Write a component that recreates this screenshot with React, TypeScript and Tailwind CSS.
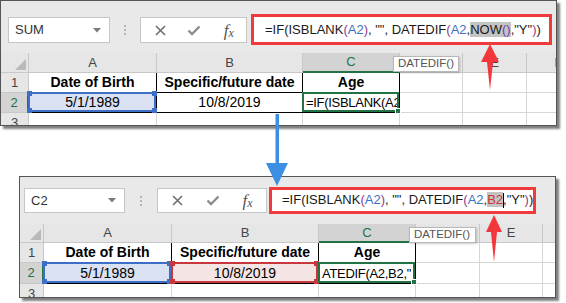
import React from 'react';

type Tone = 'blue' | 'red' | 'green';

const GRID = 'border-r border-b border-[#d6d6d6]';
const TABLE = 'border-r border-b border-black';
const HEAD = 'border-r border-b border-[#c8c8c8] bg-[#e6e6e6] text-[#444]';

// level-2 / level-3 bracket colours and range colours, as Excel shows them while editing
const P2 = 'text-[#8b3d8b]';
const P3 = 'text-[#6a3fb5]';
const REF_A = 'text-[#3d6fc7]';

function RangeBox({ tone }: { tone: Tone }) {
  const border =
    tone === 'blue' ? 'border-[#3d6fc7]' : tone === 'red' ? 'border-[#c9363c]' : 'border-[#217346]';
  const bg = tone === 'blue' ? 'bg-[#3d6fc7]' : 'bg-[#c9363c]';
  return (
    <div className={`pointer-events-none absolute -left-px -top-px right-0 bottom-0 z-10 border-2 ${border}`}>
      {tone === 'green' ? (
        <span className="absolute -right-[4px] -bottom-[4px] h-[6px] w-[6px] border border-white bg-[#217346]" />
      ) : (
        <>
          <span className={`absolute -left-[3px] -top-[3px] h-[5px] w-[5px] ${bg}`} />
          <span className={`absolute -right-[3px] -top-[3px] h-[5px] w-[5px] ${bg}`} />
          <span className={`absolute -left-[3px] -bottom-[3px] h-[5px] w-[5px] ${bg}`} />
          <span className={`absolute -right-[3px] -bottom-[3px] h-[5px] w-[5px] ${bg}`} />
        </>
      )}
    </div>
  );
}

function Formula({ after }: { after: boolean }) {
  return (
    <span className="whitespace-pre text-[13px] leading-none text-[#1a1a1a]">
      =IF(ISBLANK<span className={P2}>(</span><span className={REF_A}>A2</span><span className={P2}>)</span>, "", DATEDIF<span className={P2}>(</span><span className={REF_A}>A2</span>,
      {after ? (
        <>
          <span className="bg-[#c4c4c4] text-[#c9363c]">B2</span>
          <span className="-mr-px inline-block h-[15px] w-px bg-black align-middle" />
        </>
      ) : (
        <span className="bg-[#c4c4c4]">
          NOW<span className={P3}>()</span>
        </span>
      )}
      ,"Y"<span className={P2}>)</span>)
    </span>
  );
}

function Sheet({ after }: { after: boolean }) {
  const c = after
    ? {
        frame: 'ml-[19px] mt-[50px] h-[122px] w-[537px]',
        bar: 'h-[47px]',
        name: 'ml-[4px] mt-[11px] h-[25px] w-[101px]',
        sep: 'ml-[15px] mt-[11px] h-[25px]',
        fx: 'ml-[15px] mt-[11px] h-[25px] w-[110px]',
        red: 'ml-[2px] mt-[10px] h-[27px] w-[267px] pl-[10px]',
        head: 'h-[19px]',
        r1: 'h-[20px]',
        r2: 'h-[21px]',
        r3: 'h-[13px]',
        hdr: 'w-[24px]',
        A: 'w-[128px]',
        B: 'w-[147px]',
        C: 'w-[97px]',
        D: 'w-[64px]',
        E: 'w-[63px]',
      }
    : {
        frame: 'h-[126px] w-[557px]',
        bar: 'h-[52px]',
        name: 'ml-[7px] mt-[16px] h-[26px] w-[102px]',
        sep: 'ml-[14px] mt-[16px] h-[26px]',
        fx: 'ml-[14px] mt-[16px] h-[26px] w-[107px]',
        red: 'ml-[4px] mt-[13px] h-[31px] w-[301px] pl-[11px]',
        head: 'h-[20px]',
        r1: 'h-[20px]',
        r2: 'h-[20px]',
        r3: 'h-[12px]',
        hdr: 'w-[28px]',
        A: 'w-[128px]',
        B: 'w-[146px]',
        C: 'w-[97px]',
        D: 'w-[63px]',
        E: 'w-[64px]',
      };

  const cell = 'flex shrink-0 items-center justify-center';

  return (
    <div
      className={`${c.frame} flex shrink-0 flex-col overflow-hidden border border-[#555] bg-white shadow-[3px_3px_2px_rgba(0,0,0,0.5)]`}
    >
      {/* formula bar */}
      <div className={`${c.bar} flex shrink-0 items-start bg-[#e9e9e9]`}>
        <div
          className={`${c.name} flex shrink-0 items-center justify-between border border-[#c6c6c6] bg-white pl-[6px] pr-[8px] text-[13px] text-[#333]`}
        >
          <span>{after ? 'C2' : 'SUM'}</span>
          <svg width="8" height="5" viewBox="0 0 8 5">
            <path d="M0 0 H8 L4 4.5 Z" fill="#7a7a7a" />
          </svg>
        </div>
        <div className={`${c.sep} flex w-[2px] shrink-0 flex-col items-center justify-center gap-[2px]`}>
          <span className="h-[2px] w-[2px] bg-[#b5b5b5]" />
          <span className="h-[2px] w-[2px] bg-[#b5b5b5]" />
          <span className="h-[2px] w-[2px] bg-[#b5b5b5]" />
        </div>
        <div className={`${c.fx} flex shrink-0 items-center border border-[#c6c6c6] bg-white pl-[2px]`}>
          <div className="flex w-[35px] justify-center">
            <svg width="11" height="11" viewBox="0 0 11 11">
              <path d="M1 1 L10 10 M10 1 L1 10" stroke="#6e6e6e" strokeWidth="1.6" />
            </svg>
          </div>
          <div className="flex w-[35px] justify-center">
            <svg width="14" height="11" viewBox="0 0 14 11">
              <path d="M1.5 5.5 L5 9 L12.5 1.5" stroke="#8c8c8c" strokeWidth="2.4" fill="none" />
            </svg>
          </div>
          <div className="flex w-[35px] items-end justify-center font-['Liberation_Serif',serif] italic text-[#555]">
            <span className="text-[17px] leading-none">f</span>
            <span className="text-[12px] leading-none">x</span>
          </div>
        </div>
        <div className={`${c.red} flex shrink-0 items-center border-[3px] border-[#f03a3c] bg-white`}>
          <Formula after={after} />
        </div>
      </div>

      {/* column headers (D sits under the tooltip) */}
      <div className={`${c.head} flex shrink-0 text-[13px]`}>
        <div className={`${c.hdr} ${HEAD} relative shrink-0`}>
          <svg className="absolute right-[2px] bottom-[2px]" width="11" height="11" viewBox="0 0 11 11">
            <path d="M11 0 V11 H0 Z" fill="#b9b9b9" />
          </svg>
        </div>
        <div className={`${c.A} ${cell} ${HEAD}`}>A</div>
        <div className={`${c.B} ${cell} ${HEAD}`}>B</div>
        <div className={`${c.C} ${cell} border-r border-r-[#c8c8c8] border-b-2 border-b-[#217346] bg-[#d3d3d3] text-[#217346]`}>
          C
        </div>
        <div className={`${c.D} ${cell} ${HEAD}`} />
        <div className={`${c.E} ${cell} ${HEAD}`}>E</div>
        <div className={`w-[64px] ${cell} ${HEAD}`}>F</div>
      </div>

      {/* row 1 */}
      <div className={`${c.r1} flex shrink-0 text-[14px] text-black`}>
        <div className={`${c.hdr} ${cell} ${HEAD} text-[13px]`}>1</div>
        <div className={`${c.A} ${cell} ${TABLE} font-bold`}>Date of Birth</div>
        <div className={`${c.B} ${cell} ${TABLE} font-bold whitespace-nowrap`}>Specific/future date</div>
        <div className={`${c.C} ${cell} ${TABLE} font-bold`}>Age</div>
        <div className={`${c.D} shrink-0 ${GRID}`} />
        <div className={`${c.E} shrink-0 ${GRID}`} />
        <div className={`w-[64px] shrink-0 ${GRID}`} />
      </div>

      {/* row 2 */}
      <div className={`${c.r2} flex shrink-0 text-[14px] text-black`}>
        <div
          className={`${c.hdr} ${cell} border-r-2 border-r-[#217346] border-b border-b-[#c8c8c8] bg-[#d3d3d3] text-[13px] text-[#217346]`}
        >
          2
        </div>
        <div className={`${c.A} ${cell} ${TABLE} relative bg-[#d9e1f2]`}>
          5/1/1989
          <RangeBox tone="blue" />
        </div>
        <div className={`${c.B} ${cell} ${TABLE} relative ${after ? 'bg-[#f5e4e4]' : ''}`}>
          10/8/2019
          {after && <RangeBox tone="red" />}
        </div>
        <div className={`${c.C} flex shrink-0 items-center ${TABLE} relative pl-[3px]`}>
          <div className="overflow-hidden whitespace-pre">
            {after ? (
              <span className="text-[13px] tracking-[-0.3px]">ATEDIF(A2,B2,"</span>
            ) : (
              <span className="text-[13px] tracking-[-0.3px]">=IF(ISBLANK(A2</span>
            )}
          </div>
          <RangeBox tone="green" />
        </div>
        <div className={`${c.D} shrink-0 ${GRID}`} />
        <div className={`${c.E} shrink-0 ${GRID}`} />
        <div className={`w-[64px] shrink-0 ${GRID}`} />
      </div>

      {/* row 3, cut by the frame */}
      <div className={`${c.r3} flex shrink-0 items-start overflow-hidden`}>
        <div className={`${c.hdr} ${cell} ${HEAD} h-[20px] text-[13px]`}>3</div>
        <div className={`${c.A} h-[20px] shrink-0 ${GRID}`} />
        <div className={`${c.B} h-[20px] shrink-0 ${GRID}`} />
        <div className={`${c.C} h-[20px] shrink-0 ${GRID}`} />
        <div className={`${c.D} h-[20px] shrink-0 ${GRID}`} />
        <div className={`${c.E} h-[20px] shrink-0 ${GRID}`} />
        <div className={`h-[20px] w-[64px] shrink-0 ${GRID}`} />
      </div>
    </div>
  );
}

function Tip({ className }: { className: string }) {
  return (
    <div
      className={`absolute z-20 flex h-[16px] items-center border border-[#b8b8b8] bg-white px-[4px] text-[11.5px] text-[#555] shadow-[1px_1px_2px_rgba(0,0,0,0.2)] ${className}`}
    >
      DATEDIF()
    </div>
  );
}

export default function App() {
  return (
    <div className="relative h-[303px] w-[566px] overflow-hidden bg-white font-['Liberation_Sans',Arial,sans-serif]">
      <div className="flex flex-col">
        <Sheet after={false} />
        <Sheet after />
      </div>

      <Tip className="left-[393px] top-[56px] w-[66px]" />
      <Tip className="left-[409px] top-[227px] w-[67px]" />

      {/* arrows drawn over the shots */}
      <svg className="absolute left-[264px] top-[114px] z-30" width="26" height="74" viewBox="0 0 26 74">
        <path d="M11.5 0 H15 V49 H24 L13 72 L2 49 H11.5 Z" fill="#3c8fe3" />
      </svg>
      <svg className="absolute left-[480px] top-[43px] z-30" width="20" height="48" viewBox="0 0 20 48">
        <path d="M10 1 L19 19 H13 L10 47 L7 19 H1 Z" fill="#f3363a" />
      </svg>
      <svg className="absolute left-[485px] top-[214px] z-30" width="18" height="49" viewBox="0 0 18 49">
        <path d="M9 1 L17 18 H12 L9 48 L6 18 H1 Z" fill="#f3363a" />
      </svg>
    </div>
  );
}
